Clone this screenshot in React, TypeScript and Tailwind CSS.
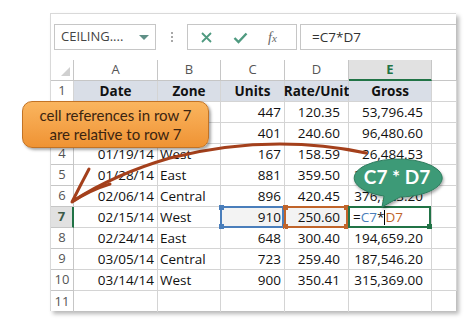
import React from "react"

const rows: string[][] = [
  ["01/02/14", "East", "447", "120.35", "53,796.45"],
  ["01/10/14", "Central", "401", "240.60", "96,480.60"],
  ["01/19/14", "West", "167", "158.59", "26,484.53"],
  ["01/28/14", "East", "881", "359.50", "316,719.50"],
  ["02/06/14", "Central", "896", "420.45", "376,723.20"],
  ["02/15/14", "West", "910", "250.60", ""],
  ["02/24/14", "East", "648", "300.40", "194,659.20"],
  ["03/05/14", "Central", "723", "259.40", "187,546.20"],
  ["03/14/14", "West", "900", "350.41", "315,369.00"],
]

const cell = "h-[21px] border-r border-b border-[#d4d4d4] flex items-center whitespace-nowrap"

function Handle({ pos, color }: { pos: string; color: string }) {
  return <div className={`absolute w-[5px] h-[5px] ${pos} ${color}`} />
}

export default function App() {
  return (
    <div className="relative w-[474px] h-[322px] bg-white overflow-hidden" style={{ fontFamily: '"Open Sans", sans-serif' }}>
      <div className="pt-[13px] pl-[50px]">
        <div className="w-[406px] h-[298px] bg-white border-t border-l border-[#d9d9d9] shadow-[3px_3px_4px_rgba(0,0,0,0.28)]">
          {/* formula bar */}
          <div className="h-[46px] flex items-start pt-[10px] pl-[3px]">
            <div className="w-[102px] h-[26px] border border-[#c6c6c6] flex items-center justify-between pl-[6px] pr-[6px]">
              <span className="text-[13px] text-[#444]">CEILING....</span>
              <span className="w-0 h-0 border-l-[5px] border-r-[5px] border-t-[5px] border-l-transparent border-r-transparent border-t-[#5f8f86]" />
            </div>
            <div className="w-[31px] h-[26px] flex items-center justify-center">
              <div className="flex flex-col gap-[2px]">
                <span className="w-[2px] h-[2px] bg-[#a8a8a8]" />
                <span className="w-[2px] h-[2px] bg-[#a8a8a8]" />
                <span className="w-[2px] h-[2px] bg-[#a8a8a8]" />
              </div>
            </div>
            <div className="w-[110px] h-[26px] border border-[#c6c6c6] flex items-center pl-[12px] gap-[20px]">
              <svg width="13" height="13" viewBox="0 0 13 13">
                <path d="M2 2 L11 11 M11 2 L2 11" stroke="#4f9a80" strokeWidth="1.8" fill="none" />
              </svg>
              <svg width="15" height="13" viewBox="0 0 15 13">
                <path d="M1.5 7 L5.5 11 L13.5 2.5" stroke="#4f9a80" strokeWidth="2.4" fill="none" />
              </svg>
              <span className="text-[14px] text-[#666] italic" style={{ fontFamily: '"Liberation Serif", serif' }}>
                f<span className="text-[11px]">x</span>
              </span>
            </div>
            <div className="ml-[3px] flex-1 h-[26px] border-t border-b border-l border-[#c6c6c6] flex items-center pl-[11px]">
              <span className="text-[13.5px] text-[#333]">=C7*D7</span>
            </div>
          </div>

          {/* sheet */}
          <div className="grid grid-cols-[23px_84px_63px_64px_64px_83px_25px] text-[13.5px] text-[#111]">
            {/* column header */}
            <div className="h-[21px] border-r border-b border-[#c6c6c6] relative">
              <span className="absolute right-[3px] bottom-[4px] w-0 h-0 border-l-[9px] border-t-[9px] border-l-transparent border-t-transparent border-b-0 border-r-0" style={{ borderBottom: "9px solid #d0d0d0", borderLeft: "9px solid transparent", borderTop: 0 }} />
            </div>
            {["A", "B", "C", "D"].map((l) => (
              <div key={l} className="h-[21px] border-r border-b border-[#c6c6c6] flex items-center justify-center text-[13px] text-[#555]">
                {l}
              </div>
            ))}
            <div className="h-[21px] bg-[#e1e1e1] border-r border-[#c6c6c6] border-b-2 border-b-[#217346] flex items-center justify-center text-[13px] font-bold text-[#217346]">
              E
            </div>
            <div className="h-[21px] border-b border-[#c6c6c6]" />

            {/* row 1 */}
            <div className={`${cell} justify-center text-[13px] text-[#555] border-[#c6c6c6]`}>1</div>
            {["Date", "Zone", "Units", "Rate/Unit", "Gross"].map((h) => (
              <div key={h} className={`${cell} justify-center font-bold bg-[#d9dee7]`}>
                {h}
              </div>
            ))}
            <div className={cell} />

            {rows.map((r, i) => {
              const n = i + 2
              const sel = n === 7
              return (
                <React.Fragment key={n}>
                  <div
                    className={`h-[21px] border-b flex items-center justify-center text-[13px] ${
                      sel
                        ? "bg-[#e1e1e1] border-b-[#c6c6c6] border-r-2 border-r-[#217346] font-bold text-[#3c5a48]"
                        : "border-r border-[#c6c6c6] text-[#555]"
                    }`}
                  >
                    {n}
                  </div>
                  <div className={`${cell} justify-end pr-[3px]`}>{r[0]}</div>
                  <div className={`${cell} pl-[2px]`}>{r[1]}</div>
                  <div className={`${cell} justify-end pr-[3px] relative ${sel ? "bg-[#f3f3f3]" : ""}`}>
                    {r[2]}
                    {sel && (
                      <div className="absolute -left-px -top-px right-0 -bottom-px border-2 border-[#4a7ebb]">
                        <Handle pos="-left-[3px] -top-[3px]" color="bg-[#4a7ebb]" />
                        <Handle pos="-left-[3px] -bottom-[3px]" color="bg-[#4a7ebb]" />
                      </div>
                    )}
                  </div>
                  <div className={`${cell} justify-end pr-[8px] relative ${sel ? "bg-[#f3f3f3]" : ""}`}>
                    {r[3]}
                    {sel && (
                      <div className="absolute -left-px -top-px right-0 -bottom-px border-2 border-[#c0642a]">
                        <Handle pos="-left-[3px] -top-[3px]" color="bg-[#c0642a]" />
                        <Handle pos="-left-[3px] -bottom-[3px]" color="bg-[#c0642a]" />
                        <Handle pos="-right-[3px] -top-[3px]" color="bg-[#c0642a]" />
                        <Handle pos="-right-[3px] -bottom-[3px]" color="bg-[#c0642a]" />
                      </div>
                    )}
                  </div>
                  {sel ? (
                    <div className={`${cell} relative pl-[4px]`}>
                      <span>=</span>
                      <span className="text-[#4a7ebb]">C7</span>
                      <span>*</span>
                      <span className="w-px h-[15px] bg-black" />
                      <span className="text-[#c0642a]">D7</span>
                      <div className="absolute -left-px -top-px right-0 -bottom-px border-2 border-[#217346]">
                        <Handle pos="-right-[3px] -bottom-[3px]" color="bg-[#217346]" />
                      </div>
                    </div>
                  ) : (
                    <div className={`${cell} justify-end pr-[8px]`}>{r[4]}</div>
                  )}
                  <div className={cell} />
                </React.Fragment>
              )
            })}

            {/* row 11 */}
            <div className="h-[21px] border-r border-[#c6c6c6] flex items-center justify-center text-[13px] text-[#555]">11</div>
            <div className="h-[21px] border-r border-[#d4d4d4]" />
            <div className="h-[21px] border-r border-[#d4d4d4]" />
            <div className="h-[21px] border-r border-[#d4d4d4]" />
            <div className="h-[21px] border-r border-[#d4d4d4]" />
            <div className="h-[21px] border-r border-[#d4d4d4]" />
            <div className="h-[21px]" />
          </div>
        </div>
      </div>

      {/* arrow */}
      <svg className="absolute left-0 top-0 pointer-events-none" width="474" height="322" viewBox="0 0 474 322">
        <path d="M366 153 Q 270 133 170 158 Q 115 174 73 201" stroke="#a4401c" strokeWidth="3" fill="none" strokeLinecap="round" />
        <path d="M89 169 Q 80 186 72 202 Q 90 190 110 184" stroke="#a4401c" strokeWidth="3" fill="none" strokeLinecap="round" strokeLinejoin="round" />
      </svg>

      {/* orange callout */}
      <div
        className="absolute left-[22px] top-[101px] w-[187px] h-[47px] rounded-[10px] border border-[#c27325] bg-gradient-to-b from-[#fab55e] to-[#ef9333] shadow-[2px_2px_3px_rgba(0,0,0,0.35)] flex flex-col items-center justify-center text-[15px] leading-[19px] text-[#3b2410]"
        style={{ fontFamily: "Lato, sans-serif" }}
      >
        <span>cell references in row 7</span>
        <span>are relative to row 7</span>
      </div>

      {/* green callout */}
      <svg className="absolute left-0 top-0 pointer-events-none" width="474" height="322" viewBox="0 0 474 322">
        <defs>
          <filter id="sh" x="-20%" y="-20%" width="140%" height="150%">
            <feDropShadow dx="1" dy="2" stdDeviation="1.5" floodColor="#000" floodOpacity="0.35" />
          </filter>
        </defs>
        <path
          d="M384 196 A 44 19 0 1 1 400 197 L 382 207 Z"
          fill="#3d9a77"
          stroke="#2f7c5e"
          strokeWidth="1"
          filter="url(#sh)"
        />
      </svg>
      <div
        className="absolute left-[353px] top-[165px] w-[88px] text-center text-[19px] leading-[24px] font-bold text-white"
        style={{ fontFamily: "Lato, sans-serif" }}
      >
        C7 * D7
      </div>
    </div>
  )
}
